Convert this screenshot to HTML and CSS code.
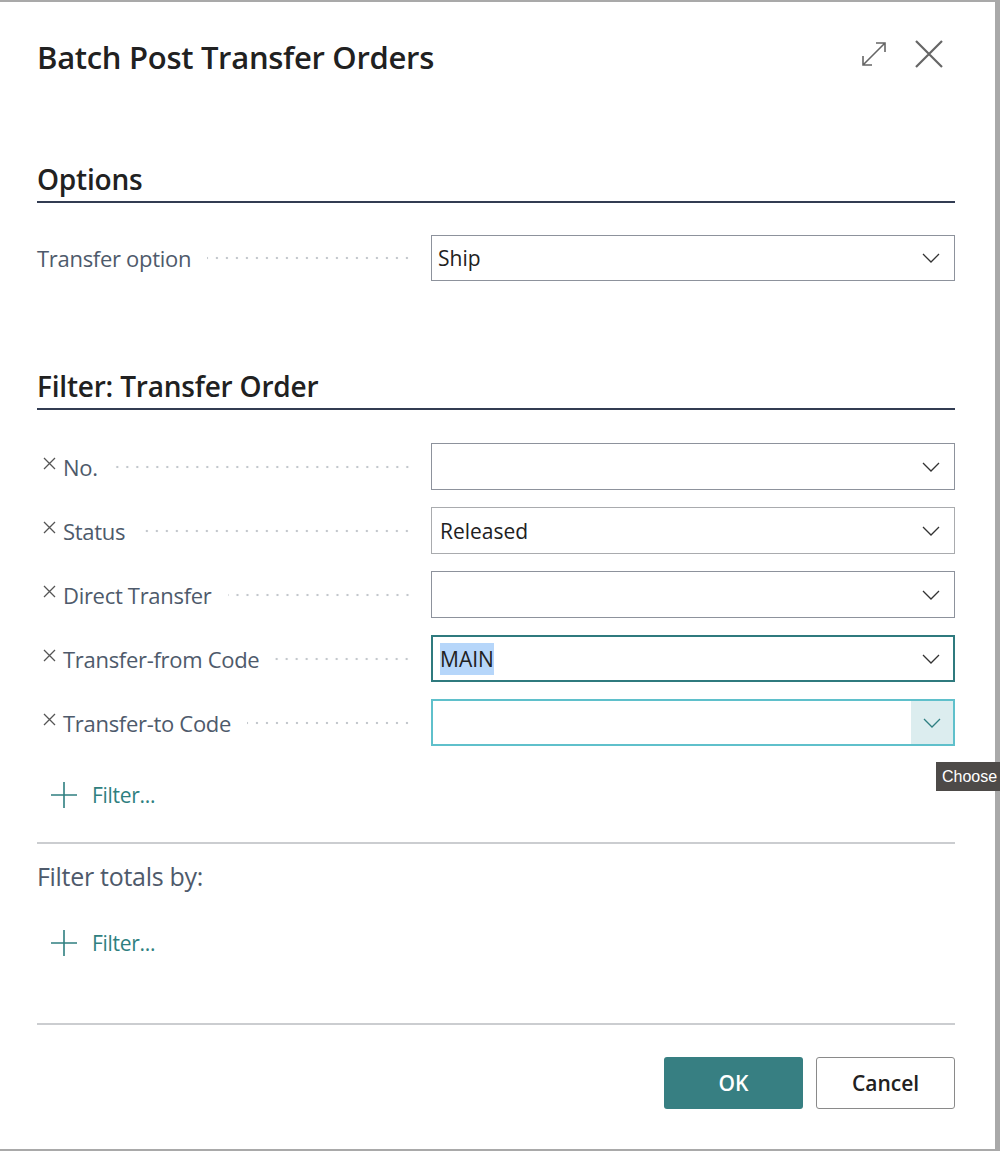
FILE: index.html
```html
<!DOCTYPE html>
<html lang="en">
<head>
<meta charset="utf-8">
<title>Batch Post Transfer Orders</title>
<link rel="stylesheet" href="styles.css">
</head>
<body>
<div class="dialog">
  <header class="dlg-header">
    <h1 class="dlg-title">Batch Post Transfer Orders</h1>
    <div class="dlg-actions">
      <svg class="ico-expand" width="28" height="28" viewBox="0 0 28 28"><path d="M3 25 L25 3 M16 3 H25 V12 M3 16 V25 H12" fill="none" stroke="#666" stroke-width="1.6"/></svg>
      <svg class="ico-close" width="30" height="30" viewBox="0 0 30 30"><path d="M2 2 L28 28 M28 2 L2 28" fill="none" stroke="#666" stroke-width="2.2"/></svg>
    </div>
  </header>

  <h2 class="section-title first">Options</h2>
  <div class="field-row option-row">
    <div class="field-label"><span class="label-text">Transfer option</span><span class="leader"></span></div>
    <div class="field-box"><span class="value">Ship</span><span class="chev"><svg width="18" height="10" viewBox="0 0 18 10"><path d="M1 1 L9 9 L17 1" fill="none" stroke="#333" stroke-width="1.3"/></svg></span></div>
  </div>

  <h2 class="section-title second">Filter: Transfer Order</h2>
  <div class="filter-rows">
    <div class="field-row">
      <div class="field-label"><span class="x"><svg width="13" height="13" viewBox="0 0 13 13"><path d="M1 1 L12 12 M12 1 L1 12" stroke="#555" stroke-width="1.3"/></svg></span><span class="label-text">No.</span><span class="leader"></span></div>
      <div class="field-box"><span class="value"></span><span class="chev"><svg width="18" height="10" viewBox="0 0 18 10"><path d="M1 1 L9 9 L17 1" fill="none" stroke="#333" stroke-width="1.3"/></svg></span></div>
    </div>
    <div class="field-row">
      <div class="field-label"><span class="x"><svg width="13" height="13" viewBox="0 0 13 13"><path d="M1 1 L12 12 M12 1 L1 12" stroke="#555" stroke-width="1.3"/></svg></span><span class="label-text">Status</span><span class="leader"></span></div>
      <div class="field-box light"><span class="value">Released</span><span class="chev"><svg width="18" height="10" viewBox="0 0 18 10"><path d="M1 1 L9 9 L17 1" fill="none" stroke="#333" stroke-width="1.3"/></svg></span></div>
    </div>
    <div class="field-row">
      <div class="field-label"><span class="x"><svg width="13" height="13" viewBox="0 0 13 13"><path d="M1 1 L12 12 M12 1 L1 12" stroke="#555" stroke-width="1.3"/></svg></span><span class="label-text">Direct Transfer</span><span class="leader"></span></div>
      <div class="field-box"><span class="value"></span><span class="chev"><svg width="18" height="10" viewBox="0 0 18 10"><path d="M1 1 L9 9 L17 1" fill="none" stroke="#333" stroke-width="1.3"/></svg></span></div>
    </div>
    <div class="field-row">
      <div class="field-label"><span class="x"><svg width="13" height="13" viewBox="0 0 13 13"><path d="M1 1 L12 12 M12 1 L1 12" stroke="#555" stroke-width="1.3"/></svg></span><span class="label-text">Transfer-from Code</span><span class="leader"></span></div>
      <div class="field-box focused"><span class="value"><span class="sel">MAIN</span></span><span class="chev"><svg width="18" height="10" viewBox="0 0 18 10"><path d="M1 1 L9 9 L17 1" fill="none" stroke="#333" stroke-width="1.3"/></svg></span></div>
    </div>
    <div class="field-row">
      <div class="field-label"><span class="x"><svg width="13" height="13" viewBox="0 0 13 13"><path d="M1 1 L12 12 M12 1 L1 12" stroke="#555" stroke-width="1.3"/></svg></span><span class="label-text">Transfer-to Code</span><span class="leader"></span></div>
      <div class="field-box hover"><span class="value"></span><span class="chev"><svg width="18" height="10" viewBox="0 0 18 10"><path d="M1 1 L9 9 L17 1" fill="none" stroke="#2f7f82" stroke-width="1.3"/></svg></span></div>
    </div>
  </div>

  <div class="add-filter first-add">
    <svg width="30" height="30" viewBox="0 0 30 30"><path d="M15 2 V28 M2 15 H28" stroke="#2f7f80" stroke-width="1.6"/></svg>
    <span>Filter...</span>
  </div>

  <hr class="sep sep1">
  <div class="totals-label">Filter totals by:</div>
  <div class="add-filter second-add">
    <svg width="30" height="30" viewBox="0 0 30 30"><path d="M15 2 V28 M2 15 H28" stroke="#2f7f80" stroke-width="1.6"/></svg>
    <span>Filter...</span>
  </div>

  <hr class="sep sep2">
  <div class="buttons">
    <button class="btn btn-ok">OK</button>
    <button class="btn btn-cancel">Cancel</button>
  </div>
</div>
<div class="tooltip">Choose</div>
</body>
</html>
```

FILE: styles.css
```css
* { box-sizing: border-box; }
html, body {
  margin: 0;
  padding: 0;
  width: 1000px;
  height: 1151px;
  overflow: hidden;
}
body {
  background: #a9a9a9;
  font-family: "Open Sans", "Noto Sans", sans-serif;
  position: relative;
}
.dialog {
  width: 995px;
  height: 1147px;
  margin-top: 2px;
  background: #fff;
  padding: 0 40px 0 37px;
  display: flex;
  flex-direction: column;
}
.dlg-header {
  display: flex;
  justify-content: space-between;
  align-items: center;
  padding-top: 33px;
  height: 76px;
}
.dlg-title {
  margin: 0;
  font-size: 31px;
  line-height: 42px;
  font-weight: 600;
  color: #212121;
  letter-spacing: -0.3px;
}
.dlg-actions {
  display: flex;
  align-items: center;
  gap: 26px;
  margin-right: 11px;
  margin-top: -6px;
}
.section-title {
  margin: 0;
  font-size: 28px;
  line-height: 36px;
  font-weight: 600;
  color: #212121;
  padding-bottom: 4px;
  border-bottom: 2px solid #323c52;
  letter-spacing: -0.2px;
}
.section-title.first { margin-top: 83px; }
.section-title.second { margin-top: 87px; }
.option-row { margin-top: 31px; }
.filter-rows {
  margin-top: 33px;
  display: flex;
  flex-direction: column;
  gap: 17px;
}
.field-row {
  display: flex;
  align-items: center;
  height: 47px;
}
.field-label {
  width: 394px;
  display: flex;
  align-items: center;
  padding-right: 19px;
  font-size: 22px;
  color: #4e5a6b;
  letter-spacing: -0.3px;
}
.x {
  width: 26px;
  display: flex;
  justify-content: flex-start;
  padding-left: 6px;
  margin-top: -6px;
}
.label-text { white-space: nowrap; }
.leader {
  flex: 1;
  height: 4px;
  margin-left: 16px;
  background-image: radial-gradient(circle, #c3c7cc 1.2px, transparent 1.6px);
  background-size: 10px 4px;
  background-position: right center;
  background-repeat: repeat-x;
}
.field-box {
  flex: 1;
  height: 47px;
  border: 1px solid #8d929c;
  display: flex;
  align-items: center;
  justify-content: space-between;
  padding-left: 8px;
  font-size: 21px;
  color: #212121;
}
.option-row .field-box { height: 46px; padding-left: 6px; }
.field-box.light { border-color: #a9abae; }
.field-box.focused { border: 2px solid #2f7a7e; padding-left: 7px; }
.field-box.hover { border: 2px solid #5fc0cb; padding-left: 7px; }
.value { white-space: nowrap; }
.sel { background: #b6d6fa; padding: 2px 0; }
.chev {
  width: 42px;
  height: 100%;
  display: flex;
  align-items: center;
  justify-content: center;
  margin-right: 2px;
}
.field-box.focused .chev { margin-right: 1px; }
.field-box.hover .chev { background: #dcedef; margin-right: 0; width: 42px; }
.add-filter {
  display: flex;
  align-items: center;
  gap: 13px;
  padding-left: 12px;
  height: 30px;
  font-size: 21px;
  color: #2f7f80;
  letter-spacing: -0.3px;
}
.first-add { margin-top: 34px; }
.sep {
  border: 0;
  height: 2px;
  background: #cbcdd0;
  margin: 0;
}
.sep1 { margin-top: 32px; }
.totals-label {
  margin-top: 16px;
  font-size: 25px;
  line-height: 32px;
  color: #4e5a6b;
  letter-spacing: -0.3px;
}
.second-add { margin-top: 36px; }
.sep2 { margin-top: 65px; }
.buttons {
  margin-top: 32px;
  display: flex;
  justify-content: flex-end;
  gap: 13px;
}
.btn {
  width: 139px;
  height: 52px;
  border-radius: 3px;
  font-family: "Open Sans", "Noto Sans", sans-serif;
  font-size: 21px;
  font-weight: 600;
}
.btn-ok {
  background: #377f82;
  color: #fff;
  border: 0;
}
.btn-cancel {
  background: #fff;
  color: #212121;
  border: 1px solid #8a8a8a;
}
.tooltip {
  position: absolute;
  left: 936px;
  top: 762px;
  height: 29px;
  width: 64px;
  padding: 0 0 0 6px;
  background: #4d4a48;
  color: #fff;
  font-family: "Liberation Sans", sans-serif;
  font-size: 16px;
  line-height: 29px;
  white-space: nowrap;
}
```
